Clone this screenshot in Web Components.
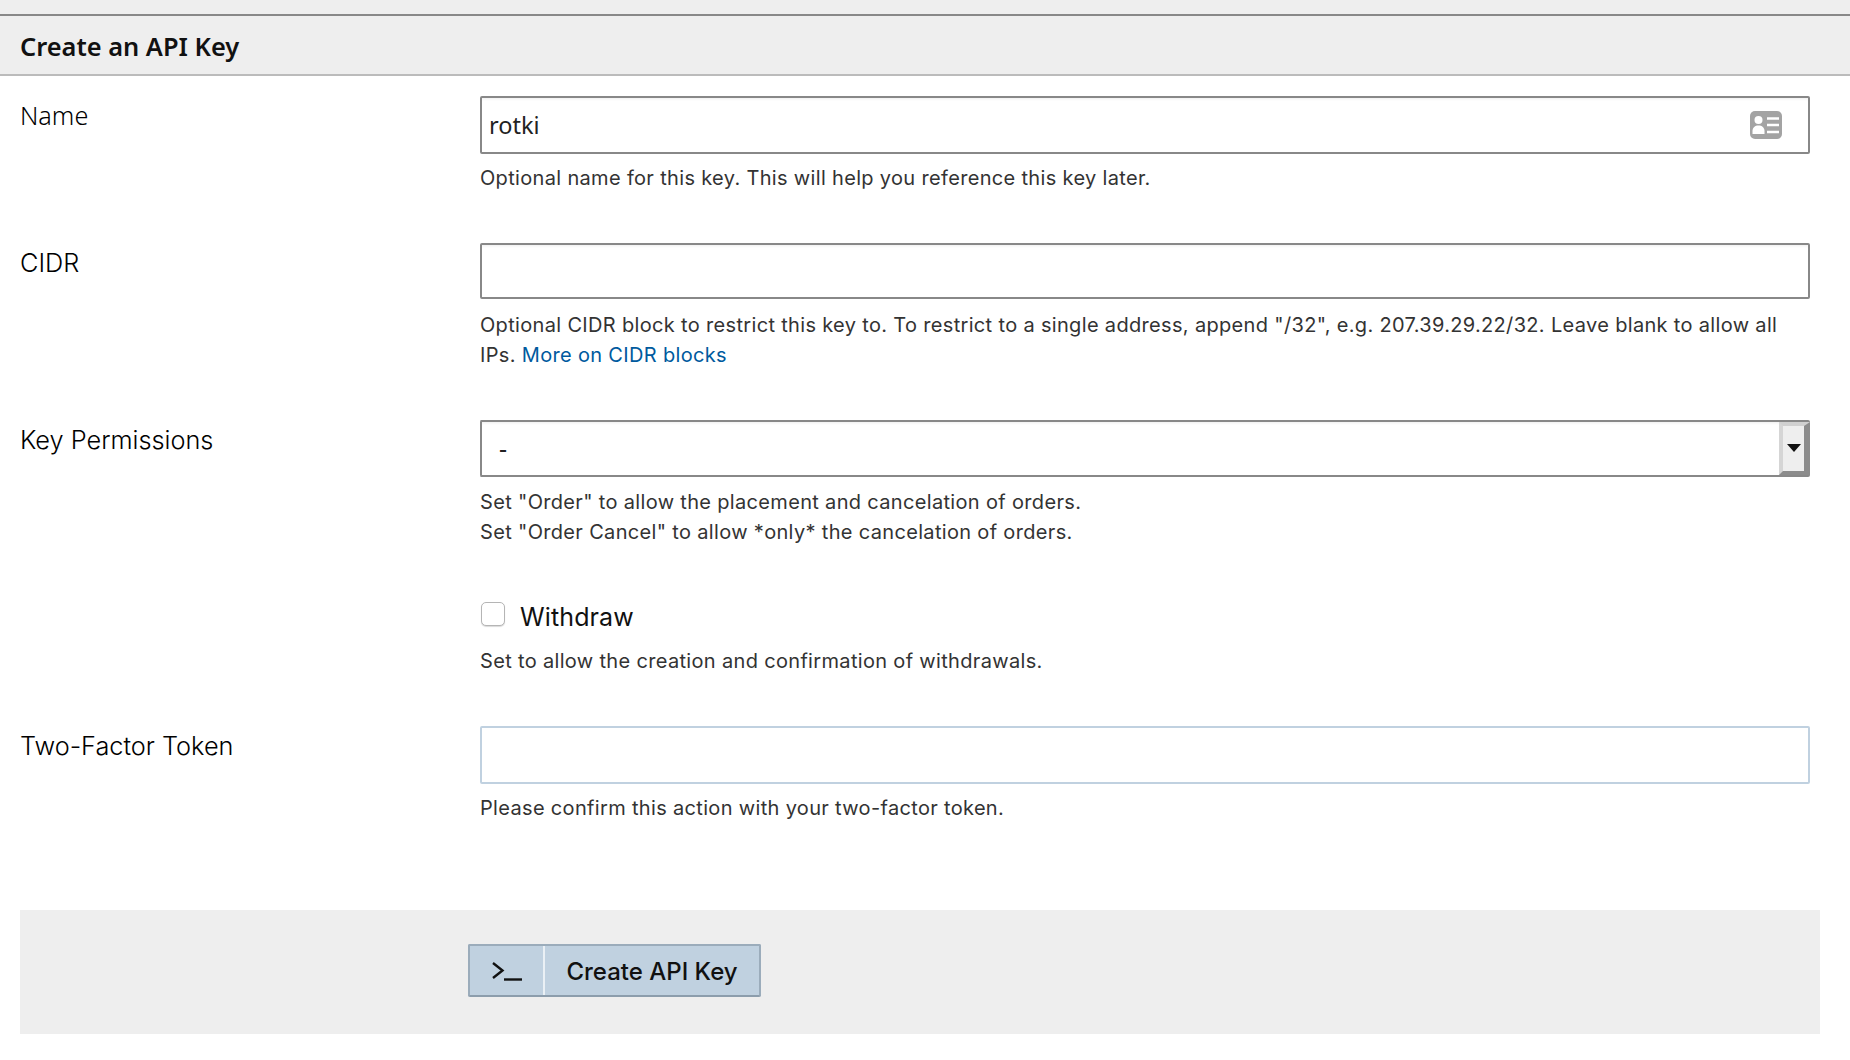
<!DOCTYPE html>
<html>
<head>
<meta charset="utf-8">
<title>Create an API Key</title>
<style>
  html, body { margin: 0; background: #fff; }
  body { font-family: Inter, sans-serif; }
</style>
</head>
<body>
<key-panel heading="Create an API Key">
  <form-row label="Name" noto style="height:147px">
    <text-field value="rotki" card></text-field>
    <help-text>Optional name for this key. This will help you reference this key later.</help-text>
  </form-row>
  <form-row label="CIDR" style="height:177px">
    <text-field style="--field-h:56px"></text-field>
    <help-text style="margin-top:11px">Optional CIDR block to restrict this key to. To restrict to a single address, append "/32", e.g. 207.39.29.22/32. Leave blank to allow all<br>IPs. <a href="#" style="color:#005a9e;text-decoration:none">More on CIDR blocks</a></help-text>
  </form-row>
  <form-row label="Key Permissions" style="height:178px">
    <select-field value="-"></select-field>
    <help-text style="margin-top:10px">Set "Order" to allow the placement and cancelation of orders.<br>Set "Order Cancel" to allow *only* the cancelation of orders.</help-text>
  </form-row>
  <form-row style="height:128px">
    <check-field label="Withdraw"></check-field>
    <help-text style="margin-top:10px">Set to allow the creation and confirmation of withdrawals.</help-text>
  </form-row>
  <form-row label="Two-Factor Token">
    <text-field focus></text-field>
    <help-text>Please confirm this action with your two-factor token.</help-text>
  </form-row>
  <form-footer slot="footer">
    <action-button label="Create API Key"></action-button>
  </form-footer>
</key-panel>

<script>
class KeyPanel extends HTMLElement {
  constructor() {
    super();
    this.attachShadow({ mode: 'open' });
  }
  connectedCallback() {
    this.shadowRoot.innerHTML = `
      <style>
        :host { display: block; height: 1060px; background: #fff; color: #000; }
        .top { height: 14px; background: #eee; border-bottom: 2px solid #888; }
        h2 {
          margin: 0; height: 58px; padding-left: 20px;
          background: #eee; border-bottom: 2px solid #bbb;
          font: 600 25.400px/60px "Noto Sans", sans-serif; color: #111;
        }
        .rows { padding-top: 20px; height: 834px; box-sizing: border-box; }
      </style>
      <div class="top"></div>
      <h2>${this.getAttribute('heading')}</h2>
      <div class="rows"><slot></slot></div>
      <slot name="footer"></slot>
    `;
  }
}

class FormRow extends HTMLElement {
  constructor() {
    super();
    this.attachShadow({ mode: 'open' });
  }
  connectedCallback() {
    this.shadowRoot.innerHTML = `
      <style>
        :host { display: grid; grid-template-columns: 460px 1330px; padding-left: 20px; box-sizing: border-box; }
        label { font: 300 25.300px/40px Inter, sans-serif; color: #000; }
        :host([noto]) label { font-family: "Noto Sans", sans-serif; font-size: 25.200px; line-height: 38px; font-weight: 300; }
      </style>
      <label>${this.getAttribute('label') || ''}</label>
      <div><slot></slot></div>
    `;
  }
}

class TextField extends HTMLElement {
  constructor() {
    super();
    this.attachShadow({ mode: 'open' });
  }
  connectedCallback() {
    const card = this.hasAttribute('card') ? `
      <svg width="32" height="28" viewBox="0 0 32 28">
        <rect width="32" height="28" rx="5" fill="#a3a3a3"/>
        <circle cx="8.500" cy="9" r="4" fill="#fff"/>
        <path d="M2.500 23v-3c0-3.500 2.500-5.500 6-5.500s6 2 6 5.500v3z" fill="#fff"/>
        <path d="M17 7.500h12M17 14h12M17 21h12" stroke="#fff" stroke-width="2.600"/>
      </svg>` : '';
    this.shadowRoot.innerHTML = `
      <style>
        :host { display: block; }
        .box {
          height: var(--field-h, 58px); box-sizing: border-box; border: 2px solid #888; border-radius: 2px;
          display: flex; align-items: center; justify-content: space-between;
          padding: 0 26px 0 7px; background: #fff;
          box-shadow: inset 0 3px 3px -2px #eee;
          font: 400 23.500px "Noto Sans", sans-serif; color: #222;
        }
        svg { margin-top: -1px; }
        :host([focus]) .box { border-color: #c0d1e0; box-shadow: none; }
      </style>
      <div class="box"><span>${this.getAttribute('value') || ''}</span>${card}</div>
    `;
  }
}

class SelectField extends HTMLElement {
  constructor() {
    super();
    this.attachShadow({ mode: 'open' });
  }
  connectedCallback() {
    this.shadowRoot.innerHTML = `
      <style>
        :host { display: block; }
        .box {
          height: 57px; box-sizing: border-box; border: 2px solid #888; border-right: 0; border-radius: 2px;
          display: flex; align-items: stretch; background: #fff;
          box-shadow: inset 0 3px 3px -2px #eee;
          font: 400 25px "Noto Sans", sans-serif; color: #222;
        }
        .value { flex: 1; padding-left: 17px; line-height: 52px; }
        .arrow {
          width: 31px; box-sizing: border-box; background: #eee;
          border-style: solid; border-width: 4px 6px 4px 4px;
          border-color: #d0d0d0 #8c8c8c #8c8c8c #d5d5d5;
          display: flex; align-items: center; justify-content: center;
        }
        svg { display: block; margin-bottom: 2px; }
      </style>
      <div class="box">
        <div class="value">${this.getAttribute('value')}</div>
        <div class="arrow"><svg width="14" height="8" viewBox="0 0 14 8"><path d="M0 0h14L7 8z" fill="#111"/></svg></div>
      </div>
    `;
  }
}

class CheckField extends HTMLElement {
  constructor() {
    super();
    this.attachShadow({ mode: 'open' });
  }
  connectedCallback() {
    this.shadowRoot.innerHTML = `
      <style>
        :host { display: flex; align-items: center; gap: 15px; height: 38px; font: 400 25px Inter, sans-serif; letter-spacing: .12px; color: #111; }
        i {
          display: block; width: 24px; height: 24px; box-sizing: border-box; margin: 0 0 6px 1px;
          background: #fff; border: 1px solid #b5b5b5; border-radius: 5px;
          box-shadow: 0 1px 1px rgba(0,0,0,.15);
        }
      </style>
      <i></i><span>${this.getAttribute('label')}</span>
    `;
  }
}

class HelpText extends HTMLElement {
  constructor() {
    super();
    this.attachShadow({ mode: 'open' });
  }
  connectedCallback() {
    this.shadowRoot.innerHTML = `
      <style>
        :host { display: block; margin-top: 9px; font: 400 20px/30px Inter, sans-serif; letter-spacing: .33px; color: #333; }
      </style>
      <slot></slot>
    `;
  }
}

class FormFooter extends HTMLElement {
  constructor() {
    super();
    this.attachShadow({ mode: 'open' });
  }
  connectedCallback() {
    this.shadowRoot.innerHTML = `
      <style>
        :host { display: block; box-sizing: border-box; margin-left: 20px; width: 1800px; height: 124px; padding: 34px 0 0 448px; background: #eee; }
      </style>
      <slot></slot>
    `;
  }
}

class ActionButton extends HTMLElement {
  constructor() {
    super();
    this.attachShadow({ mode: 'open' });
  }
  connectedCallback() {
    this.shadowRoot.innerHTML = `
      <style>
        :host { display: inline-flex; box-sizing: border-box; width: 293px; height: 53px; background: #c0d1e0; border: 2px solid #9bacbb; border-bottom-color: #8c9dac; border-radius: 2px; font: 500 24px Inter, sans-serif; color: #111; }
        .icon { width: 75px; flex: none; box-sizing: border-box; display: flex; align-items: center; justify-content: center; border-right: 2px solid #eaf0f5; }
        .text { flex: 1; text-align: center; line-height: 51px; }
      </style>
      <div class="icon">
        <svg width="32" height="20" viewBox="0 0 32 20" fill="none" stroke="#111" stroke-width="2.400">
          <path d="M2 2l9.500 7.500L2 17"/><path d="M13 18.500h18"/>
        </svg>
      </div>
      <div class="text">${this.getAttribute('label')}</div>
    `;
  }
}

customElements.define('key-panel', KeyPanel);
customElements.define('form-row', FormRow);
customElements.define('text-field', TextField);
customElements.define('select-field', SelectField);
customElements.define('check-field', CheckField);
customElements.define('help-text', HelpText);
customElements.define('form-footer', FormFooter);
customElements.define('action-button', ActionButton);
</script>
</body>
</html>
